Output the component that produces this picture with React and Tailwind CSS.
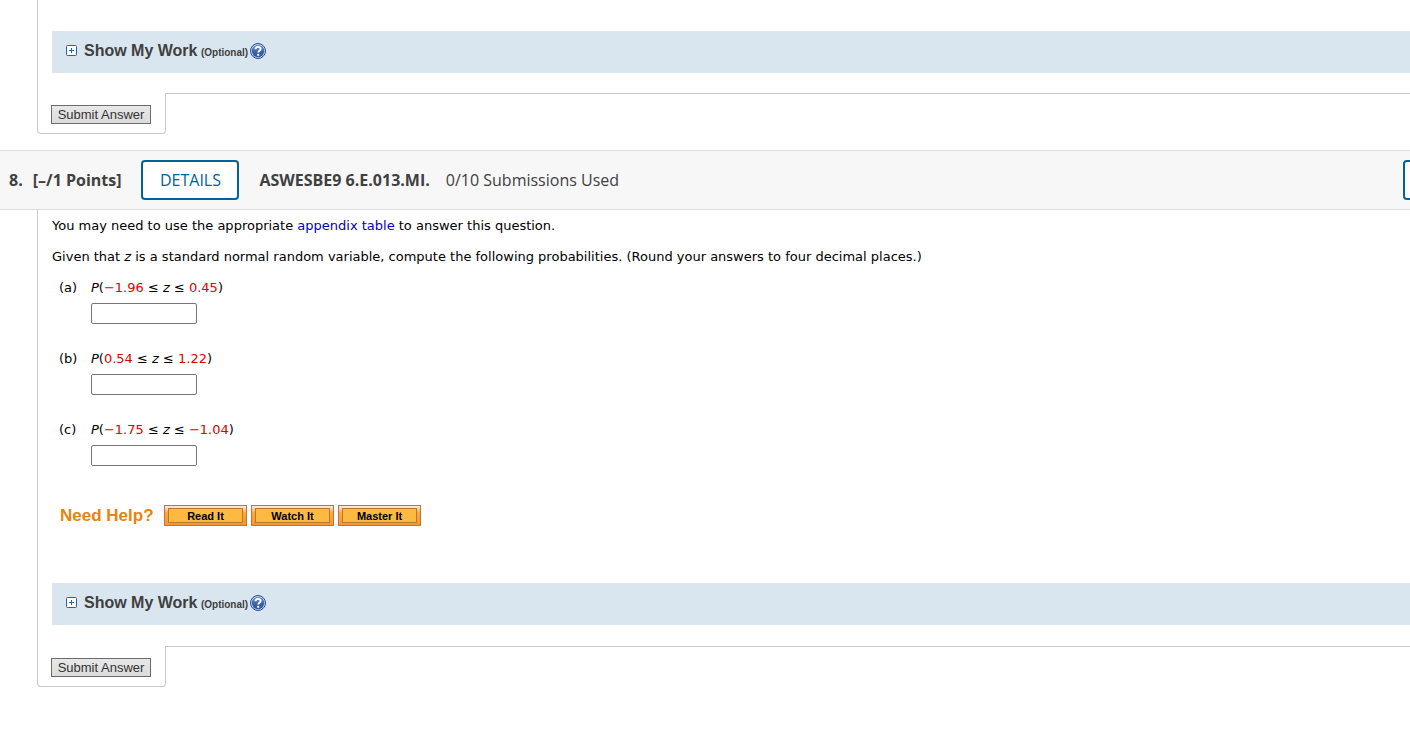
import React, { useState } from "react";

const parts = [
  { id: "a", low: "−1.96", high: "0.45" },
  { id: "b", low: "0.54", high: "1.22" },
  { id: "c", low: "−1.75", high: "−1.04" },
];

// small helpers
const Num = ({ children }) => <span className="text-[#dd0000]">{children}</span>;

const PlusIcon = () => (
  <svg width="11" height="11" viewBox="0 0 11 11" className="mt-1 shrink-0" aria-hidden="true">
    <rect x="0.5" y="0.5" width="10" height="10" rx="1" fill="#ffffff" stroke="#2a639b" />
    <path d="M3 5.5h5M5.5 3v5" stroke="#2a639b" strokeWidth="1" />
  </svg>
);

const HelpIcon = () => (
  <svg width="16" height="16" viewBox="0 0 16 16" aria-hidden="true">
    <defs>
      <linearGradient id="help-fill" x1="0" y1="0" x2="0" y2="1">
        <stop offset="0" stopColor="#7f9fd4" />
        <stop offset="0.5" stopColor="#3f66ad" />
        <stop offset="1" stopColor="#2c5399" />
      </linearGradient>
    </defs>
    <circle cx="8" cy="8" r="7.5" fill="#c3d0e6" stroke="#2b4f92" />
    <circle cx="8" cy="8" r="6.2" fill="url(#help-fill)" />
    <path d="M5.6 6.3c0-3.2 5-3.1 5-.3 0 1.8-2.4 1.7-2.4 3.6" fill="none" stroke="#ffffff" strokeWidth="1.9" />
    <rect x="7.2" y="10.8" width="2" height="2" fill="#ffffff" />
  </svg>
);

const ShowMyWork = () => (
  <div className="flex h-[42px] items-start bg-[#dae6ef] pl-3.5 pt-2.5 font-['Liberation_Sans',Arial,sans-serif] text-[#404040]">
    <button type="button" className="flex items-start gap-[7px]">
      <PlusIcon />
      <span className="text-base leading-5 font-bold">
        Show My Work <span className="-ml-px text-[10px]">(Optional)</span>
      </span>
    </button>
    <button type="button" aria-label="Help" className="ml-0.5 flex h-5 items-center">
      <HelpIcon />
    </button>
  </div>
);

// the tab hanging under the question body, with the rule running off to the right
const SubmitTab = () => (
  <div className="ml-[37px] flex">
    <div className="h-[41px] w-[129px] shrink-0 rounded-b border-x border-b border-[#c8c8c8] pt-3 pl-[13px]">
      <button type="button" className="block h-[19px] w-[100px] border border-[#6b6b6b] bg-linear-to-b from-[#e8e8e8] to-[#dcdcdc] font-['Liberation_Sans',Arial,sans-serif] text-[13px] leading-[17px] text-[#333333] whitespace-nowrap">
        Submit Answer
      </button>
    </div>
    <div className="flex-1 border-t border-[#c8c8c8]" />
  </div>
);

const HelpButton = ({ children }) => (
  <button type="button" className="h-[21px] w-[83px] border border-[#b27a34] bg-linear-to-b from-[#fff0dc] via-[#ffa63f] via-35% to-[#fb952b] px-[3px] py-0.5">
    <span className="block h-[15px] border border-[#b8792c] bg-[#fdb940] text-[11px] leading-[14px] font-bold text-black">
      {children}
    </span>
  </button>
);

const QuestionHeader = () => (
  <header className="flex h-[60px] items-center overflow-hidden border-y border-[#dcdcdc] bg-[#f7f7f7] pl-[9px] font-['Open_Sans','Noto_Sans',sans-serif] text-base text-[#404040] whitespace-nowrap">
    <h2 className="flex items-center gap-2.5 font-bold">
      <span>8.</span>
      <span>[–/1 Points]</span>
    </h2>
    <button type="button" className="ml-5 h-10 w-[98px] shrink-0 rounded border-2 border-[#006298] bg-white text-[#006298]">
      DETAILS
    </button>
    <strong className="ml-5 font-bold">ASWESBE9 6.E.013.MI.</strong>
    <span className="ml-4">0/10 Submissions Used</span>
    <button type="button" aria-label="More" className="-mr-[113px] ml-auto h-10 w-[120px] shrink-0 rounded border-2 border-[#006298] bg-white" />
  </header>
);

const App = () => {
  const [answers, setAnswers] = useState({ a: "", b: "", c: "" });

  const updateAnswer = (id, value) => setAnswers((prev) => ({ ...prev, [id]: value }));

  return (
    <main className="overflow-x-hidden bg-white">
      {/* end of the previous question */}
      <section>
        <div className="ml-[37px] border-l border-[#c8c8c8] pt-[31px] pb-5 pl-3.5">
          <ShowMyWork />
        </div>
        <SubmitTab />
      </section>

      <section className="mt-4">
        <QuestionHeader />
        <div className="ml-[37px] border-l border-[#c8c8c8] pt-1.5 pb-[21px] pl-3.5">
          <div className="font-[Verdana,'DejaVu_Sans',sans-serif] text-[13px] leading-5 text-black">
            <p>
              You may need to use the appropriate{" "}
              <a href="#appendix" className="text-[#0000cc]">appendix table</a> to answer this question.
            </p>
            <p className="mt-[11px]">
              Given that <i>z</i> is a standard normal random variable, compute the following probabilities. (Round your answers to four decimal places.)
            </p>

            <div className="mt-[11px] flex flex-col gap-[25px] pl-[7px]">
              {parts.map((part) => (
                <div key={part.id} className="flex">
                  <span className="w-8 shrink-0">({part.id})</span>
                  <div>
                    <label htmlFor={`answer-${part.id}`} className="block">
                      <i>P</i>(<Num>{part.low}</Num> ≤ <i>z</i> ≤ <Num>{part.high}</Num>)
                    </label>
                    <input
                      id={`answer-${part.id}`}
                      type="text"
                      value={answers[part.id]}
                      onChange={(e) => updateAnswer(part.id, e.target.value)}
                      className="mt-[5px] block h-[21px] w-[106px] rounded-xs border border-[#767676] bg-white px-1"
                    />
                  </div>
                </div>
              ))}
            </div>
          </div>

          <div className="mt-[39px] mb-[57px] flex items-center gap-1 pl-2 font-['Liberation_Sans',Arial,sans-serif]">
            <span className="w-[100px] text-[17px] leading-5 font-bold text-[#e8830c] whitespace-nowrap">Need Help?</span>
            <HelpButton>Read It</HelpButton>
            <HelpButton>Watch It</HelpButton>
            <HelpButton>Master It</HelpButton>
          </div>

          <ShowMyWork />
        </div>
        <SubmitTab />
      </section>
    </main>
  );
};

export default App;
